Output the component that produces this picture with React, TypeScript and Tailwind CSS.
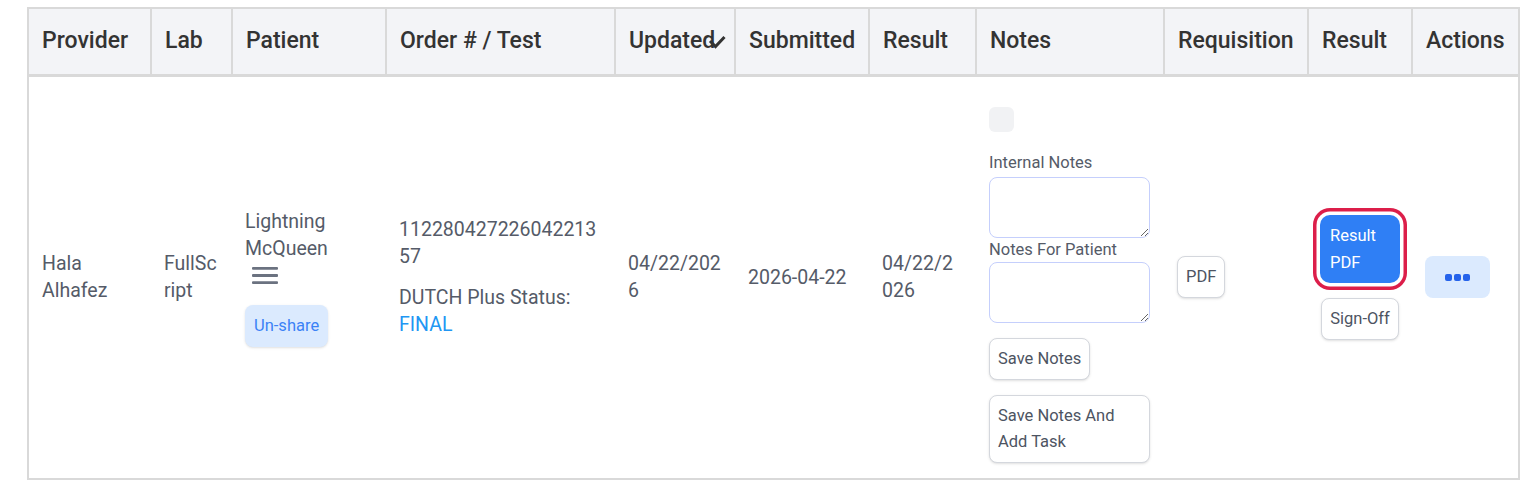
import React from "react";

const headers = [
  { label: "Provider", w: "w-[123px]" },
  { label: "Lab", w: "w-[81px]" },
  { label: "Patient", w: "w-[154px]" },
  { label: "Order # / Test", w: "w-[229px]" },
  { label: "Updated", w: "w-[120px]", sorted: true },
  { label: "Submitted", w: "w-[134px]" },
  { label: "Result", w: "w-[107px]" },
  { label: "Notes", w: "w-[188px]" },
  { label: "Requisition", w: "w-[144px]" },
  { label: "Result", w: "w-[104px]" },
  { label: "Actions", w: "w-[107px]" },
];

const btn =
  "bg-white border border-[#d4d7dd] rounded-lg shadow-sm px-2 py-[7px] text-[16.5px] leading-[26px] text-[#4d5462] text-left";

function MenuIcon() {
  return (
    <svg width="26" height="18" viewBox="0 0 26 18" className="ml-[7px] mt-[5px]">
      <rect x="0" y="0" width="26" height="2.8" rx="1" fill="#6b7280" />
      <rect x="0" y="7.1" width="26" height="2.8" rx="1" fill="#6b7280" />
      <rect x="0" y="14.2" width="26" height="2.8" rx="1" fill="#6b7280" />
    </svg>
  );
}

export default function App() {
  return (
    <div className="w-full min-h-screen bg-white pt-[7px] pl-[27px] font-['Roboto',sans-serif]">
      <table className="table-fixed border-collapse w-[1491px] border-2 border-[#d9d9d9]">
        <colgroup>
          {headers.map((h, i) => (
            <col key={i} className={h.w} />
          ))}
        </colgroup>
        <thead>
          <tr className="bg-[#f3f4f7]">
            {headers.map((h, i) => (
              <th
                key={i}
                className="h-[67px] px-[13px] py-0 text-left align-middle font-medium text-[23px] text-[#333333] border-r-2 border-b-[3px] border-[#d9d9d9] whitespace-nowrap"
              >
                {h.label}
                {h.sorted && (
                  <svg width="18" height="16" viewBox="0 0 18 16" className="inline-block -ml-[7px] align-[-1px]">
                    <path d="M2 8 L7.5 13.5 L16.5 4" stroke="#333" strokeWidth="3" fill="none" />
                  </svg>
                )}
              </th>
            ))}
          </tr>
        </thead>
        <tbody>
          <tr className="text-[19.5px] leading-[27px] text-[#555b68] align-middle">
            <td className="px-[13px] [overflow-wrap:anywhere]">Hala Alhafez</td>
            <td className="px-[13px] [overflow-wrap:anywhere]">FullScript</td>
            <td className="px-[13px]">
              <div className="flex flex-col items-start">
                <span>Lightning McQueen</span>
                <MenuIcon />
                <button className="mt-[20px] bg-[#dbeafe] text-[#3b82f6] rounded-lg shadow-sm px-[9px] py-[8px] text-[16.5px] leading-[26px]">
                  Un-share
                </button>
              </div>
            </td>
            <td className="px-[13px]">
              <div className="[overflow-wrap:anywhere]">11228042722604221357</div>
              <div className="mt-[14px]">DUTCH Plus Status:</div>
              <div className="text-[#2196f3]">FINAL</div>
            </td>
            <td className="px-[13px] [overflow-wrap:anywhere]">04/22/2026</td>
            <td className="px-[13px]">2026-04-22</td>
            <td className="pl-[13px] pr-[16px] [overflow-wrap:anywhere]">04/22/2026</td>
            <td className="px-[13px] pt-[30px] pb-[15px]">
              <div className="flex flex-col items-start w-[161px] text-[16.5px] leading-[24px]">
                <span className="w-[25px] h-[25px] rounded-md bg-[#f1f2f4]" />
                <label className="mt-[19px]">Internal Notes</label>
                <textarea className="block w-[161px] h-[61px] mt-[2px] border-[1.5px] border-[#c5cffc] rounded-lg bg-white" />
                <label>Notes For Patient</label>
                <textarea className="block w-[161px] h-[61px] border-[1.5px] border-[#c5cffc] rounded-lg bg-white" />
                <button className={`${btn} mt-[15px]`}>Save Notes</button>
                <button className={`${btn} mt-[15px]`}>Save Notes And Add Task</button>
              </div>
            </td>
            <td className="px-[13px]">
              <button className={btn}>PDF</button>
            </td>
            <td className="px-0">
              <div className="flex flex-col items-center gap-[15px]">
                <button className="bg-[#2f7ff5] text-white rounded-[10px] px-[10px] py-[7px] w-[80px] text-left text-[16.5px] leading-[27px] ring-[3.5px] ring-[#dc1e4a] ring-offset-[3.5px] ring-offset-white">
                  Result PDF
                </button>
                <button className={btn}>Sign-Off</button>
              </div>
            </td>
            <td className="px-[13px]">
              <button className="w-[65px] h-[42px] rounded-lg bg-[#dbeafe] flex items-center justify-center gap-[2px]">
                <span className="w-[7px] h-[7px] rounded-[2px] bg-[#2563eb]" />
                <span className="w-[7px] h-[7px] rounded-[2px] bg-[#2563eb]" />
                <span className="w-[7px] h-[7px] rounded-[2px] bg-[#2563eb]" />
              </button>
            </td>
          </tr>
        </tbody>
      </table>
    </div>
  );
}
